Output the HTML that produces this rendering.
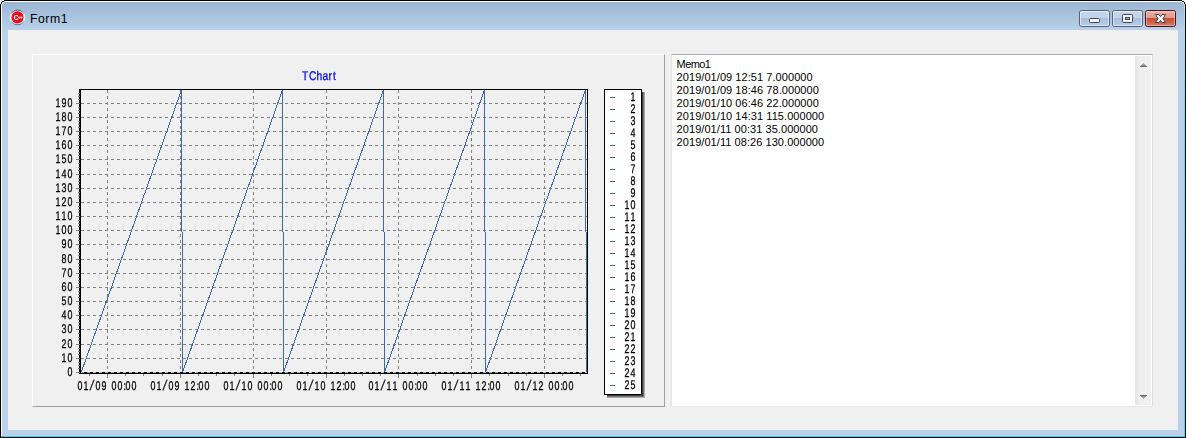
<!DOCTYPE html>
<html><head><meta charset="utf-8"><title>Form1</title>
<style>
html,body{margin:0;padding:0;background:#fff;}
body{width:1186px;height:438px;position:relative;overflow:hidden;font-family:"Liberation Sans",sans-serif;}
.abs{position:absolute;}
#win{left:0;top:0;width:1186px;height:438px;background:#B9D1EA;}
#cap{left:0;top:0;width:1186px;height:30px;background:linear-gradient(#99B4D1,#B9D1EA);}
#client{left:8px;top:30px;width:1170px;height:400px;background:#F0F0F0;}
#title{left:30px;top:11px;font-size:12.3px;line-height:16px;color:#000;letter-spacing:0.5px;white-space:nowrap;}
#panel{left:32px;top:54px;width:631px;height:351px;border-top:1px solid #fff;border-left:1px solid #fff;border-right:1px solid #A0A0A0;border-bottom:1px solid #A0A0A0;background:#F0F0F0;}
#memo{left:671px;top:54px;width:480px;height:351px;background:#fff;border:1px solid #E3E9EF;border-top-color:#ABADB3;border-left-color:#E2E3EA;border-right-color:#DBDFE6;}
#memotext{left:676.6px;top:58px;font-size:11px;line-height:13px;color:#000;white-space:pre;letter-spacing:0.06px;}
#sb{left:1135px;top:56px;width:16px;height:349px;background:linear-gradient(90deg,#e3e3e3,#efefef 30%,#f0f0f0);}
.btn{top:10px;width:29px;height:15px;border:1px solid #55617B;border-radius:2.5px;}
.btn i{position:absolute;left:0;top:0;right:0;bottom:0;border:1px solid rgba(255,255,255,.55);border-radius:1.5px;}
.bb{background:linear-gradient(#C3D6EB 0,#C0D4EA 46%,#A4BEDC 47%,#B6CEEA 100%);}
.bc{background:linear-gradient(#E9AFA1 0,#E29A8A 46%,#C34A30 47%,#D57C66 100%);border-color:#431422;}
</style></head><body>
<div id="win" class="abs"></div>
<div id="cap" class="abs"></div>
<!-- frame borders -->
<div class="abs" style="left:0;top:0;width:1186px;height:1px;background:#000"></div>
<div class="abs" style="left:0;top:0;width:1px;height:438px;background:#000"></div>
<div class="abs" style="left:1px;top:1px;width:1184px;height:1px;background:#fff"></div>
<div class="abs" style="left:1px;top:1px;width:1px;height:435px;background:#fff"></div>
<div class="abs" style="left:1184px;top:2px;width:1px;height:435px;background:linear-gradient(#A8E8F8,#58D8FC 30%,#40D8F8)"></div>
<div class="abs" style="left:1px;top:436px;width:1184px;height:1px;background:#38D8F4"></div>
<div class="abs" style="left:1185px;top:0;width:1px;height:438px;background:#000"></div>
<div class="abs" style="left:0;top:437px;width:1186px;height:1px;background:#000"></div>
<!-- corners -->
<svg class="abs" style="left:0;top:0" width="1186" height="8" shape-rendering="crispEdges">
<rect x="0" y="0" width="4" height="1" fill="#fff"/><rect x="0" y="1" width="2" height="1" fill="#fff"/><rect x="0" y="2" width="1" height="2" fill="#fff"/>
<rect x="2" y="1" width="2" height="1" fill="#000"/><rect x="1" y="2" width="1" height="2" fill="#000"/>
<rect x="2" y="2" width="2" height="1" fill="#fff"/><rect x="2" y="3" width="1" height="1" fill="#fff"/>
<rect x="1182" y="0" width="4" height="1" fill="#fff"/><rect x="1184" y="1" width="2" height="1" fill="#fff"/><rect x="1185" y="2" width="1" height="2" fill="#fff"/>
<rect x="1182" y="1" width="2" height="1" fill="#000"/><rect x="1182" y="2" width="2" height="1" fill="#C4EEF8"/><rect x="1183" y="3" width="1" height="1" fill="#C4EEF8"/><rect x="1184" y="2" width="1" height="2" fill="#000"/>
</svg>
<!-- icon -->
<svg class="abs" style="left:9px;top:9px" width="18" height="18" viewBox="0 0 18 18">
<defs><linearGradient id="rg" x1="0" y1="0" x2="0" y2="1"><stop offset="0" stop-color="#56708f"/><stop offset="0.3" stop-color="#dfe7ef"/><stop offset="0.7" stop-color="#dfe7ef"/><stop offset="1" stop-color="#5a7494"/></linearGradient></defs>
<circle cx="8.5" cy="8.4" r="7.3" fill="#f2f5f8" stroke="url(#rg)" stroke-width="1.1"/>
<circle cx="8.5" cy="8.4" r="6.1" fill="#E60F1E"/>
<text transform="translate(4.7,11.2) scale(0.8,1)" font-family="'Liberation Sans',sans-serif" font-weight="bold" font-size="8" fill="#fff">C</text>
<text x="8.9" y="9.9" font-family="'Liberation Sans',sans-serif" font-weight="bold" font-size="5" fill="#fff" letter-spacing="-0.7">++</text>
</svg>
<div id="title" class="abs">Form1</div>
<!-- caption buttons -->
<div class="abs btn bb" style="left:1079px"><i></i></div>
<div class="abs btn bb" style="left:1112px"><i></i></div>
<div class="abs btn bc" style="left:1145px"><i style="border-color:rgba(255,220,210,.5)"></i></div>
<svg class="abs" style="left:1079px;top:10px" width="100" height="17" viewBox="1079 10 100 17">
<rect x="1089.5" y="18.5" width="10" height="4" rx="1" fill="#F4F4F4" stroke="#3E455A"/>
<rect x="1122.5" y="14.5" width="10" height="8" rx="1" fill="#F4F4F4" stroke="#3E455A"/>
<rect x="1125.5" y="17.5" width="4" height="2" fill="#8FB0D6" stroke="#3E455A"/>
<path d="M1155.5 14.5h3.4l1.6 2.2 1.6-2.2h3.4l-2.5 4 2.5 4h-3.4l-1.6-2.2-1.6 2.2h-3.4l2.5-4z" fill="#fff" stroke="#3D3F58" stroke-width="1" stroke-linejoin="round"/>
</svg>
<div id="client" class="abs"></div>
<div id="panel" class="abs"></div>
<div id="memo" class="abs"></div>
<div id="sb" class="abs"></div>
<svg class="abs" style="left:1135px;top:56px" width="16" height="349" viewBox="1135 56 16 349" shape-rendering="crispEdges">
<defs><linearGradient id="ug" x1="0" y1="0" x2="0" y2="1"><stop offset="0" stop-color="#b8b8b8"/><stop offset="1" stop-color="#5a5a5a"/></linearGradient>
<linearGradient id="dg" x1="0" y1="0" x2="0" y2="1"><stop offset="0" stop-color="#5a5a5a"/><stop offset="1" stop-color="#b8b8b8"/></linearGradient></defs>
<rect x="1143" y="63" width="1" height="1" fill="#b6b6b6"/><rect x="1142" y="64" width="3" height="1" fill="#a4a4a4"/><rect x="1141" y="65" width="5" height="1" fill="#8c8c8c"/><rect x="1140" y="66" width="7" height="1" fill="#6c6c6c"/>
<rect x="1140" y="395" width="7" height="1" fill="#6c6c6c"/><rect x="1141" y="396" width="5" height="1" fill="#8c8c8c"/><rect x="1142" y="397" width="3" height="1" fill="#a4a4a4"/><rect x="1143" y="398" width="1" height="1" fill="#b6b6b6"/>
</svg>
<div id="memotext" class="abs"><span style="letter-spacing:-0.6px">Memo1</span>
2019/01/09 12:51 7.000000
2019/01/09 18:46 78.000000
2019/01/10 06:46 22.000000
2019/01/10 14:31 115.000000
2019/01/11 00:31 35.000000
2019/01/11 08:26 130.000000</div>
<svg id="chart" width="1186" height="438" viewBox="0 0 1186 438" style="position:absolute;left:0;top:0;will-change:transform" font-family="'Liberation Sans', sans-serif" shape-rendering="crispEdges">
<g stroke="#808080" stroke-width="1" stroke-dasharray="3 3" fill="none">
<line x1="81" y1="358.5" x2="587" y2="358.5"/>
<line x1="81" y1="344.5" x2="587" y2="344.5"/>
<line x1="81" y1="329.5" x2="587" y2="329.5"/>
<line x1="81" y1="315.5" x2="587" y2="315.5"/>
<line x1="81" y1="301.5" x2="587" y2="301.5"/>
<line x1="81" y1="287.5" x2="587" y2="287.5"/>
<line x1="81" y1="273.5" x2="587" y2="273.5"/>
<line x1="81" y1="259.5" x2="587" y2="259.5"/>
<line x1="81" y1="244.5" x2="587" y2="244.5"/>
<line x1="81" y1="230.5" x2="587" y2="230.5"/>
<line x1="81" y1="216.5" x2="587" y2="216.5"/>
<line x1="81" y1="202.5" x2="587" y2="202.5"/>
<line x1="81" y1="188.5" x2="587" y2="188.5"/>
<line x1="81" y1="174.5" x2="587" y2="174.5"/>
<line x1="81" y1="159.5" x2="587" y2="159.5"/>
<line x1="81" y1="145.5" x2="587" y2="145.5"/>
<line x1="81" y1="131.5" x2="587" y2="131.5"/>
<line x1="81" y1="117.5" x2="587" y2="117.5"/>
<line x1="81" y1="103.5" x2="587" y2="103.5"/>
<line x1="107.5" y1="90" x2="107.5" y2="372"/>
<line x1="180.5" y1="90" x2="180.5" y2="372"/>
<line x1="253.5" y1="90" x2="253.5" y2="372"/>
<line x1="326.5" y1="90" x2="326.5" y2="372"/>
<line x1="398.5" y1="90" x2="398.5" y2="372"/>
<line x1="471.5" y1="90" x2="471.5" y2="372"/>
<line x1="544.5" y1="90" x2="544.5" y2="372"/>
</g>
<rect x="81" y="89" width="507" height="1" fill="#000"/>
<rect x="587" y="89" width="1" height="285" fill="#000"/>
<rect x="79" y="89" width="2" height="285" fill="#000"/>
<g fill="#808080">
<rect x="76" y="372" width="4" height="1"/>
<rect x="76" y="358" width="4" height="1"/>
<rect x="76" y="344" width="4" height="1"/>
<rect x="76" y="329" width="4" height="1"/>
<rect x="76" y="315" width="4" height="1"/>
<rect x="76" y="301" width="4" height="1"/>
<rect x="76" y="287" width="4" height="1"/>
<rect x="76" y="273" width="4" height="1"/>
<rect x="76" y="259" width="4" height="1"/>
<rect x="76" y="244" width="4" height="1"/>
<rect x="76" y="230" width="4" height="1"/>
<rect x="76" y="216" width="4" height="1"/>
<rect x="76" y="202" width="4" height="1"/>
<rect x="76" y="188" width="4" height="1"/>
<rect x="76" y="174" width="4" height="1"/>
<rect x="76" y="159" width="4" height="1"/>
<rect x="76" y="145" width="4" height="1"/>
<rect x="76" y="131" width="4" height="1"/>
<rect x="76" y="117" width="4" height="1"/>
<rect x="76" y="103" width="4" height="1"/>
<rect x="78" y="362" width="2" height="1"/>
<rect x="78" y="365" width="2" height="1"/>
<rect x="78" y="368" width="2" height="1"/>
<rect x="78" y="348" width="2" height="1"/>
<rect x="78" y="351" width="2" height="1"/>
<rect x="78" y="354" width="2" height="1"/>
<rect x="78" y="333" width="2" height="1"/>
<rect x="78" y="337" width="2" height="1"/>
<rect x="78" y="340" width="2" height="1"/>
<rect x="78" y="319" width="2" height="1"/>
<rect x="78" y="322" width="2" height="1"/>
<rect x="78" y="325" width="2" height="1"/>
<rect x="78" y="305" width="2" height="1"/>
<rect x="78" y="308" width="2" height="1"/>
<rect x="78" y="311" width="2" height="1"/>
<rect x="78" y="291" width="2" height="1"/>
<rect x="78" y="294" width="2" height="1"/>
<rect x="78" y="297" width="2" height="1"/>
<rect x="78" y="277" width="2" height="1"/>
<rect x="78" y="280" width="2" height="1"/>
<rect x="78" y="283" width="2" height="1"/>
<rect x="78" y="263" width="2" height="1"/>
<rect x="78" y="266" width="2" height="1"/>
<rect x="78" y="269" width="2" height="1"/>
<rect x="78" y="248" width="2" height="1"/>
<rect x="78" y="252" width="2" height="1"/>
<rect x="78" y="255" width="2" height="1"/>
<rect x="78" y="234" width="2" height="1"/>
<rect x="78" y="237" width="2" height="1"/>
<rect x="78" y="240" width="2" height="1"/>
<rect x="78" y="220" width="2" height="1"/>
<rect x="78" y="223" width="2" height="1"/>
<rect x="78" y="226" width="2" height="1"/>
<rect x="78" y="206" width="2" height="1"/>
<rect x="78" y="209" width="2" height="1"/>
<rect x="78" y="212" width="2" height="1"/>
<rect x="78" y="192" width="2" height="1"/>
<rect x="78" y="195" width="2" height="1"/>
<rect x="78" y="198" width="2" height="1"/>
<rect x="78" y="178" width="2" height="1"/>
<rect x="78" y="181" width="2" height="1"/>
<rect x="78" y="184" width="2" height="1"/>
<rect x="78" y="163" width="2" height="1"/>
<rect x="78" y="167" width="2" height="1"/>
<rect x="78" y="170" width="2" height="1"/>
<rect x="78" y="149" width="2" height="1"/>
<rect x="78" y="152" width="2" height="1"/>
<rect x="78" y="155" width="2" height="1"/>
<rect x="78" y="135" width="2" height="1"/>
<rect x="78" y="138" width="2" height="1"/>
<rect x="78" y="141" width="2" height="1"/>
<rect x="78" y="121" width="2" height="1"/>
<rect x="78" y="124" width="2" height="1"/>
<rect x="78" y="127" width="2" height="1"/>
<rect x="78" y="107" width="2" height="1"/>
<rect x="78" y="110" width="2" height="1"/>
<rect x="78" y="113" width="2" height="1"/>
<rect x="78" y="93" width="2" height="1"/>
<rect x="78" y="96" width="2" height="1"/>
<rect x="78" y="99" width="2" height="1"/>
<rect x="89" y="374" width="1" height="2"/>
<rect x="107" y="374" width="1" height="4"/>
<rect x="125" y="374" width="1" height="2"/>
<rect x="143" y="374" width="1" height="2"/>
<rect x="162" y="374" width="1" height="2"/>
<rect x="180" y="374" width="1" height="4"/>
<rect x="198" y="374" width="1" height="2"/>
<rect x="216" y="374" width="1" height="2"/>
<rect x="234" y="374" width="1" height="2"/>
<rect x="253" y="374" width="1" height="4"/>
<rect x="271" y="374" width="1" height="2"/>
<rect x="289" y="374" width="1" height="2"/>
<rect x="307" y="374" width="1" height="2"/>
<rect x="326" y="374" width="1" height="4"/>
<rect x="344" y="374" width="1" height="2"/>
<rect x="362" y="374" width="1" height="2"/>
<rect x="380" y="374" width="1" height="2"/>
<rect x="398" y="374" width="1" height="4"/>
<rect x="417" y="374" width="1" height="2"/>
<rect x="435" y="374" width="1" height="2"/>
<rect x="453" y="374" width="1" height="2"/>
<rect x="471" y="374" width="1" height="4"/>
<rect x="489" y="374" width="1" height="2"/>
<rect x="508" y="374" width="1" height="2"/>
<rect x="526" y="374" width="1" height="2"/>
<rect x="544" y="374" width="1" height="4"/>
<rect x="562" y="374" width="1" height="2"/>
<rect x="580" y="374" width="1" height="2"/>
</g>
<path d="M81.2,372.5L181.6,89.5M182.5,372.5L282.6,89.5M283.5,372.5L383.6,89.5M384.5,372.5L484.6,89.5M485.5,372.5L585.6,89.5" fill="none" stroke="#3F66AE" stroke-width="1"/>
<rect x="181" y="90" width="1" height="142" fill="#3F66AE"/>
<rect x="182" y="232" width="1" height="140" fill="#3F66AE"/>
<rect x="282" y="90" width="1" height="142" fill="#3F66AE"/>
<rect x="283" y="232" width="1" height="140" fill="#3F66AE"/>
<rect x="383" y="90" width="1" height="142" fill="#3F66AE"/>
<rect x="384" y="232" width="1" height="140" fill="#3F66AE"/>
<rect x="484" y="90" width="1" height="142" fill="#3F66AE"/>
<rect x="485" y="232" width="1" height="140" fill="#3F66AE"/>
<rect x="585" y="90" width="1" height="142" fill="#3F66AE"/>
<rect x="586" y="232" width="1" height="140" fill="#3F66AE"/>
<rect x="81" y="372" width="507" height="2" fill="#000"/>
<line x1="81" y1="372.5" x2="587" y2="372.5" stroke="#b4b4b4" stroke-width="1" stroke-dasharray="3 3"/>
<rect x="81" y="89" width="507" height="1" fill="#000"/>
<rect x="607" y="92" width="38" height="306" fill="#a8a8a8"/>
<rect x="607" y="92" width="37" height="305" fill="#727272"/>
<rect x="607" y="92" width="36" height="304" fill="#404040"/>
<rect x="604.5" y="89.5" width="37" height="305" fill="#fff" stroke="#000" stroke-width="1"/>
<rect x="610" y="97" width="5" height="1" fill="#3F66AE"/>
<rect x="610" y="109" width="5" height="1" fill="#3F66AE"/>
<rect x="610" y="121" width="5" height="1" fill="#3F66AE"/>
<rect x="610" y="133" width="5" height="1" fill="#3F66AE"/>
<rect x="610" y="145" width="5" height="1" fill="#3F66AE"/>
<rect x="610" y="157" width="5" height="1" fill="#3F66AE"/>
<rect x="610" y="169" width="5" height="1" fill="#3F66AE"/>
<rect x="610" y="181" width="5" height="1" fill="#3F66AE"/>
<rect x="610" y="193" width="5" height="1" fill="#3F66AE"/>
<rect x="610" y="205" width="5" height="1" fill="#3F66AE"/>
<rect x="610" y="217" width="5" height="1" fill="#3F66AE"/>
<rect x="610" y="229" width="5" height="1" fill="#3F66AE"/>
<rect x="610" y="241" width="5" height="1" fill="#3F66AE"/>
<rect x="610" y="253" width="5" height="1" fill="#3F66AE"/>
<rect x="610" y="265" width="5" height="1" fill="#3F66AE"/>
<rect x="610" y="277" width="5" height="1" fill="#3F66AE"/>
<rect x="610" y="289" width="5" height="1" fill="#3F66AE"/>
<rect x="610" y="301" width="5" height="1" fill="#3F66AE"/>
<rect x="610" y="313" width="5" height="1" fill="#3F66AE"/>
<rect x="610" y="325" width="5" height="1" fill="#3F66AE"/>
<rect x="610" y="337" width="5" height="1" fill="#3F66AE"/>
<rect x="610" y="349" width="5" height="1" fill="#3F66AE"/>
<rect x="610" y="361" width="5" height="1" fill="#3F66AE"/>
<rect x="610" y="373" width="5" height="1" fill="#3F66AE"/>
<rect x="610" y="385" width="5" height="1" fill="#3F66AE"/>
<g shape-rendering="auto" text-rendering="geometricPrecision">
<text transform="translate(302,80) scale(0.82,1)" x="0.00 8.54 17.68 25.00 32.32 37.80" y="0" font-size="12.5" fill="#0000ff" stroke="#0000ff" stroke-width="0.3" vector-effect="non-scaling-stroke">TChart</text>
<text transform="translate(67.6,376) scale(0.71,1)" y="0" font-size="12.5" fill="#000" stroke="#000" stroke-width="0.3" vector-effect="non-scaling-stroke"><tspan x="0.00">0</tspan></text>
<text transform="translate(61.6,362) scale(0.71,1)" y="0" font-size="12.5" fill="#000" stroke="#000" stroke-width="0.3" vector-effect="non-scaling-stroke"><tspan x="0.00 8.45">10</tspan></text>
<text transform="translate(61.6,348) scale(0.71,1)" y="0" font-size="12.5" fill="#000" stroke="#000" stroke-width="0.3" vector-effect="non-scaling-stroke"><tspan x="0.00 8.45">20</tspan></text>
<text transform="translate(61.6,333) scale(0.71,1)" y="0" font-size="12.5" fill="#000" stroke="#000" stroke-width="0.3" vector-effect="non-scaling-stroke"><tspan x="0.00 8.45">30</tspan></text>
<text transform="translate(61.6,319) scale(0.71,1)" y="0" font-size="12.5" fill="#000" stroke="#000" stroke-width="0.3" vector-effect="non-scaling-stroke"><tspan x="0.00 8.45">40</tspan></text>
<text transform="translate(61.6,305) scale(0.71,1)" y="0" font-size="12.5" fill="#000" stroke="#000" stroke-width="0.3" vector-effect="non-scaling-stroke"><tspan x="0.00 8.45">50</tspan></text>
<text transform="translate(61.6,291) scale(0.71,1)" y="0" font-size="12.5" fill="#000" stroke="#000" stroke-width="0.3" vector-effect="non-scaling-stroke"><tspan x="0.00 8.45">60</tspan></text>
<text transform="translate(61.6,277) scale(0.71,1)" y="0" font-size="12.5" fill="#000" stroke="#000" stroke-width="0.3" vector-effect="non-scaling-stroke"><tspan x="0.00 8.45">70</tspan></text>
<text transform="translate(61.6,263) scale(0.71,1)" y="0" font-size="12.5" fill="#000" stroke="#000" stroke-width="0.3" vector-effect="non-scaling-stroke"><tspan x="0.00 8.45">80</tspan></text>
<text transform="translate(61.6,248) scale(0.71,1)" y="0" font-size="12.5" fill="#000" stroke="#000" stroke-width="0.3" vector-effect="non-scaling-stroke"><tspan x="0.00 8.45">90</tspan></text>
<text transform="translate(55.6,234) scale(0.71,1)" y="0" font-size="12.5" fill="#000" stroke="#000" stroke-width="0.3" vector-effect="non-scaling-stroke"><tspan x="0.00 8.45 16.90">100</tspan></text>
<text transform="translate(55.6,220) scale(0.71,1)" y="0" font-size="12.5" fill="#000" stroke="#000" stroke-width="0.3" vector-effect="non-scaling-stroke"><tspan x="0.00 8.45 16.90">110</tspan></text>
<text transform="translate(55.6,206) scale(0.71,1)" y="0" font-size="12.5" fill="#000" stroke="#000" stroke-width="0.3" vector-effect="non-scaling-stroke"><tspan x="0.00 8.45 16.90">120</tspan></text>
<text transform="translate(55.6,192) scale(0.71,1)" y="0" font-size="12.5" fill="#000" stroke="#000" stroke-width="0.3" vector-effect="non-scaling-stroke"><tspan x="0.00 8.45 16.90">130</tspan></text>
<text transform="translate(55.6,178) scale(0.71,1)" y="0" font-size="12.5" fill="#000" stroke="#000" stroke-width="0.3" vector-effect="non-scaling-stroke"><tspan x="0.00 8.45 16.90">140</tspan></text>
<text transform="translate(55.6,163) scale(0.71,1)" y="0" font-size="12.5" fill="#000" stroke="#000" stroke-width="0.3" vector-effect="non-scaling-stroke"><tspan x="0.00 8.45 16.90">150</tspan></text>
<text transform="translate(55.6,149) scale(0.71,1)" y="0" font-size="12.5" fill="#000" stroke="#000" stroke-width="0.3" vector-effect="non-scaling-stroke"><tspan x="0.00 8.45 16.90">160</tspan></text>
<text transform="translate(55.6,135) scale(0.71,1)" y="0" font-size="12.5" fill="#000" stroke="#000" stroke-width="0.3" vector-effect="non-scaling-stroke"><tspan x="0.00 8.45 16.90">170</tspan></text>
<text transform="translate(55.6,121) scale(0.71,1)" y="0" font-size="12.5" fill="#000" stroke="#000" stroke-width="0.3" vector-effect="non-scaling-stroke"><tspan x="0.00 8.45 16.90">180</tspan></text>
<text transform="translate(55.6,107) scale(0.71,1)" y="0" font-size="12.5" fill="#000" stroke="#000" stroke-width="0.3" vector-effect="non-scaling-stroke"><tspan x="0.00 8.45 16.90">190</tspan></text>
<text transform="translate(77.6,390) scale(0.71,1)" y="0" font-size="12.5" fill="#000" stroke="#000" stroke-width="0.3" vector-effect="non-scaling-stroke"><tspan x="0.00 8.45">01</tspan><tspan x="16.06" dy="-0.1" font-family="'Liberation Mono', monospace" font-size="14.2">/</tspan><tspan dy="0.1" x="25.35 33.80 42.25 47.89 56.34 64.79 67.61 76.06">09 00:00</tspan></text>
<text transform="translate(150.6,390) scale(0.71,1)" y="0" font-size="12.5" fill="#000" stroke="#000" stroke-width="0.3" vector-effect="non-scaling-stroke"><tspan x="0.00 8.45">01</tspan><tspan x="16.06" dy="-0.1" font-family="'Liberation Mono', monospace" font-size="14.2">/</tspan><tspan dy="0.1" x="25.35 33.80 42.25 47.89 56.34 64.79 67.61 76.06">09 12:00</tspan></text>
<text transform="translate(223.6,390) scale(0.71,1)" y="0" font-size="12.5" fill="#000" stroke="#000" stroke-width="0.3" vector-effect="non-scaling-stroke"><tspan x="0.00 8.45">01</tspan><tspan x="16.06" dy="-0.1" font-family="'Liberation Mono', monospace" font-size="14.2">/</tspan><tspan dy="0.1" x="25.35 33.80 42.25 47.89 56.34 64.79 67.61 76.06">10 00:00</tspan></text>
<text transform="translate(296.6,390) scale(0.71,1)" y="0" font-size="12.5" fill="#000" stroke="#000" stroke-width="0.3" vector-effect="non-scaling-stroke"><tspan x="0.00 8.45">01</tspan><tspan x="16.06" dy="-0.1" font-family="'Liberation Mono', monospace" font-size="14.2">/</tspan><tspan dy="0.1" x="25.35 33.80 42.25 47.89 56.34 64.79 67.61 76.06">10 12:00</tspan></text>
<text transform="translate(368.6,390) scale(0.71,1)" y="0" font-size="12.5" fill="#000" stroke="#000" stroke-width="0.3" vector-effect="non-scaling-stroke"><tspan x="0.00 8.45">01</tspan><tspan x="16.06" dy="-0.1" font-family="'Liberation Mono', monospace" font-size="14.2">/</tspan><tspan dy="0.1" x="25.35 33.80 42.25 47.89 56.34 64.79 67.61 76.06">11 00:00</tspan></text>
<text transform="translate(441.6,390) scale(0.71,1)" y="0" font-size="12.5" fill="#000" stroke="#000" stroke-width="0.3" vector-effect="non-scaling-stroke"><tspan x="0.00 8.45">01</tspan><tspan x="16.06" dy="-0.1" font-family="'Liberation Mono', monospace" font-size="14.2">/</tspan><tspan dy="0.1" x="25.35 33.80 42.25 47.89 56.34 64.79 67.61 76.06">11 12:00</tspan></text>
<text transform="translate(514.6,390) scale(0.71,1)" y="0" font-size="12.5" fill="#000" stroke="#000" stroke-width="0.3" vector-effect="non-scaling-stroke"><tspan x="0.00 8.45">01</tspan><tspan x="16.06" dy="-0.1" font-family="'Liberation Mono', monospace" font-size="14.2">/</tspan><tspan dy="0.1" x="25.35 33.80 42.25 47.89 56.34 64.79 67.61 76.06">12 00:00</tspan></text>
<text transform="translate(630.6,101) scale(0.71,1)" y="0" font-size="12.5" fill="#000" stroke="#000" stroke-width="0.3" vector-effect="non-scaling-stroke"><tspan x="0.00">1</tspan></text>
<text transform="translate(630.6,113) scale(0.71,1)" y="0" font-size="12.5" fill="#000" stroke="#000" stroke-width="0.3" vector-effect="non-scaling-stroke"><tspan x="0.00">2</tspan></text>
<text transform="translate(630.6,125) scale(0.71,1)" y="0" font-size="12.5" fill="#000" stroke="#000" stroke-width="0.3" vector-effect="non-scaling-stroke"><tspan x="0.00">3</tspan></text>
<text transform="translate(630.6,137) scale(0.71,1)" y="0" font-size="12.5" fill="#000" stroke="#000" stroke-width="0.3" vector-effect="non-scaling-stroke"><tspan x="0.00">4</tspan></text>
<text transform="translate(630.6,149) scale(0.71,1)" y="0" font-size="12.5" fill="#000" stroke="#000" stroke-width="0.3" vector-effect="non-scaling-stroke"><tspan x="0.00">5</tspan></text>
<text transform="translate(630.6,161) scale(0.71,1)" y="0" font-size="12.5" fill="#000" stroke="#000" stroke-width="0.3" vector-effect="non-scaling-stroke"><tspan x="0.00">6</tspan></text>
<text transform="translate(630.6,173) scale(0.71,1)" y="0" font-size="12.5" fill="#000" stroke="#000" stroke-width="0.3" vector-effect="non-scaling-stroke"><tspan x="0.00">7</tspan></text>
<text transform="translate(630.6,185) scale(0.71,1)" y="0" font-size="12.5" fill="#000" stroke="#000" stroke-width="0.3" vector-effect="non-scaling-stroke"><tspan x="0.00">8</tspan></text>
<text transform="translate(630.6,197) scale(0.71,1)" y="0" font-size="12.5" fill="#000" stroke="#000" stroke-width="0.3" vector-effect="non-scaling-stroke"><tspan x="0.00">9</tspan></text>
<text transform="translate(624.6,209) scale(0.71,1)" y="0" font-size="12.5" fill="#000" stroke="#000" stroke-width="0.3" vector-effect="non-scaling-stroke"><tspan x="0.00 8.45">10</tspan></text>
<text transform="translate(624.6,221) scale(0.71,1)" y="0" font-size="12.5" fill="#000" stroke="#000" stroke-width="0.3" vector-effect="non-scaling-stroke"><tspan x="0.00 8.45">11</tspan></text>
<text transform="translate(624.6,233) scale(0.71,1)" y="0" font-size="12.5" fill="#000" stroke="#000" stroke-width="0.3" vector-effect="non-scaling-stroke"><tspan x="0.00 8.45">12</tspan></text>
<text transform="translate(624.6,245) scale(0.71,1)" y="0" font-size="12.5" fill="#000" stroke="#000" stroke-width="0.3" vector-effect="non-scaling-stroke"><tspan x="0.00 8.45">13</tspan></text>
<text transform="translate(624.6,257) scale(0.71,1)" y="0" font-size="12.5" fill="#000" stroke="#000" stroke-width="0.3" vector-effect="non-scaling-stroke"><tspan x="0.00 8.45">14</tspan></text>
<text transform="translate(624.6,269) scale(0.71,1)" y="0" font-size="12.5" fill="#000" stroke="#000" stroke-width="0.3" vector-effect="non-scaling-stroke"><tspan x="0.00 8.45">15</tspan></text>
<text transform="translate(624.6,281) scale(0.71,1)" y="0" font-size="12.5" fill="#000" stroke="#000" stroke-width="0.3" vector-effect="non-scaling-stroke"><tspan x="0.00 8.45">16</tspan></text>
<text transform="translate(624.6,293) scale(0.71,1)" y="0" font-size="12.5" fill="#000" stroke="#000" stroke-width="0.3" vector-effect="non-scaling-stroke"><tspan x="0.00 8.45">17</tspan></text>
<text transform="translate(624.6,305) scale(0.71,1)" y="0" font-size="12.5" fill="#000" stroke="#000" stroke-width="0.3" vector-effect="non-scaling-stroke"><tspan x="0.00 8.45">18</tspan></text>
<text transform="translate(624.6,317) scale(0.71,1)" y="0" font-size="12.5" fill="#000" stroke="#000" stroke-width="0.3" vector-effect="non-scaling-stroke"><tspan x="0.00 8.45">19</tspan></text>
<text transform="translate(624.6,329) scale(0.71,1)" y="0" font-size="12.5" fill="#000" stroke="#000" stroke-width="0.3" vector-effect="non-scaling-stroke"><tspan x="0.00 8.45">20</tspan></text>
<text transform="translate(624.6,341) scale(0.71,1)" y="0" font-size="12.5" fill="#000" stroke="#000" stroke-width="0.3" vector-effect="non-scaling-stroke"><tspan x="0.00 8.45">21</tspan></text>
<text transform="translate(624.6,353) scale(0.71,1)" y="0" font-size="12.5" fill="#000" stroke="#000" stroke-width="0.3" vector-effect="non-scaling-stroke"><tspan x="0.00 8.45">22</tspan></text>
<text transform="translate(624.6,365) scale(0.71,1)" y="0" font-size="12.5" fill="#000" stroke="#000" stroke-width="0.3" vector-effect="non-scaling-stroke"><tspan x="0.00 8.45">23</tspan></text>
<text transform="translate(624.6,377) scale(0.71,1)" y="0" font-size="12.5" fill="#000" stroke="#000" stroke-width="0.3" vector-effect="non-scaling-stroke"><tspan x="0.00 8.45">24</tspan></text>
<text transform="translate(624.6,389) scale(0.71,1)" y="0" font-size="12.5" fill="#000" stroke="#000" stroke-width="0.3" vector-effect="non-scaling-stroke"><tspan x="0.00 8.45">25</tspan></text>
</g>
</svg>
</body></html>
